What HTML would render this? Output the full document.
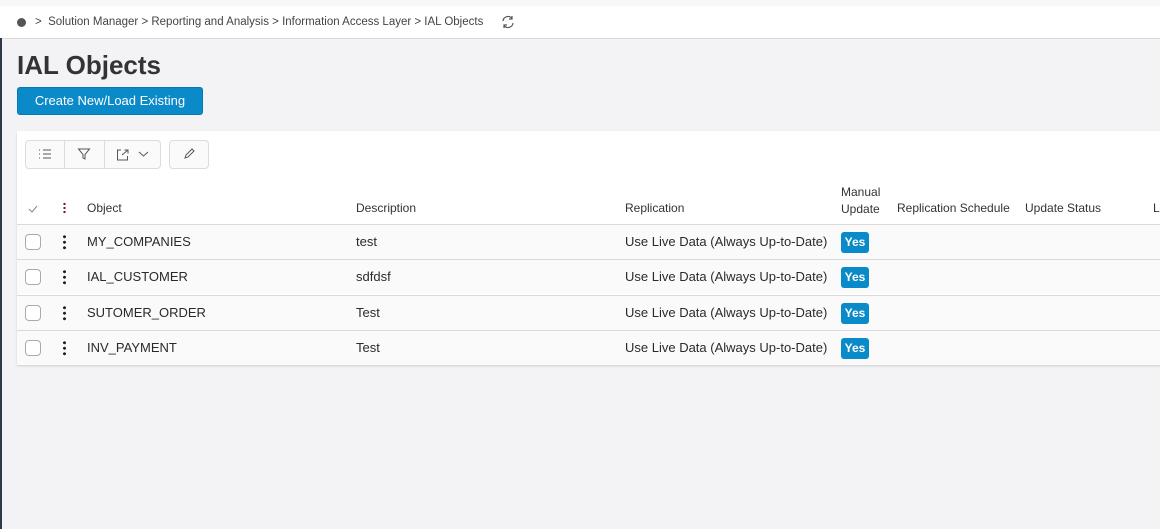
<!DOCTYPE html>
<html><head><style>
*{margin:0;padding:0;box-sizing:border-box}
body{width:1160px;height:529px;overflow:hidden;background:#f3f2f4;font-family:"Liberation Sans",sans-serif;color:#2a2a2a;position:relative}
.top{position:absolute;left:0;top:0;width:1160px;height:6px;background:#f7f7f7}
.lb{position:absolute;left:0;top:38px;width:2px;height:491px;background:#2e3a45}
.bc{position:absolute;left:0;top:6px;width:1160px;height:33px;background:#fff;border-bottom:1px solid #d8d8d8;font-size:11.5px;color:#444}
.bc .dot{position:absolute;left:17px;top:12px;width:9px;height:9px;border-radius:50%;background:#555}
.bc span.t{position:absolute;left:35px;top:10px;white-space:nowrap}
h1{position:absolute;left:17px;top:50px;font-size:26px;font-weight:bold;color:#333}
.btn{position:absolute;left:17px;top:87px;width:186px;height:28px;background:#0a8ac8;border:1px solid #0878b0;border-radius:3px;color:#fff;font-size:13px;text-align:center;line-height:26px}
.card{position:absolute;left:17px;top:131px;width:1150px;height:234px;background:#fff;box-shadow:0 1px 2px rgba(0,0,0,.15)}
.tb{position:absolute;top:140px;height:29px;border:1px solid #dcdcdc;border-radius:4px;background:#fafafa}
.hdr{position:absolute;font-size:12px;color:#333}
.row{position:absolute;left:17px;width:1143px;height:35px;background:#fafafa;border-top:1px solid #dadada;font-size:13px}
.row div{position:absolute;top:9px;white-space:nowrap}
.cb{left:8px;top:9px!important;width:16px;height:16px;border:1px solid #aaa;border-radius:4px;background:#fff}
.yes{left:824px;top:7px!important;width:28px;height:21px;background:#0a8ac8;border-radius:3px;color:#fff;font-weight:bold;font-size:12px;text-align:center;line-height:21px}
.kb{left:46px;top:9px!important;width:3px;height:16px;background:radial-gradient(circle,#222 1.4px,transparent 1.6px) 0 0/3px 5.5px repeat-y}
</style></head><body>
<div class="top"></div>
<div class="bc"><div class="dot"></div><span class="t">&gt;&nbsp;&nbsp;Solution Manager &gt; Reporting and Analysis &gt; Information Access Layer &gt; IAL Objects</span>
<svg style="position:absolute;left:500px;top:8px" width="16" height="16" viewBox="0 0 16 16" fill="none" stroke="#555" stroke-width="1.2"><path d="M3 7a5 5 0 0 1 9-2.5M13 9a5 5 0 0 1-9 2.5"/><path d="M12 2v3h-3M4 14v-3h3"/></svg></div>
<div class="lb"></div>
<h1>IAL Objects</h1>
<div class="btn">Create New/Load Existing</div>
<div class="card"></div>
<div class="tb" style="left:25px;width:136px"></div>
<div style="position:absolute;left:64px;top:141px;width:1px;height:27px;background:#dcdcdc"></div>
<div style="position:absolute;left:104px;top:141px;width:1px;height:27px;background:#dcdcdc"></div>
<svg style="position:absolute;left:37px;top:147px" width="16" height="14" viewBox="0 0 16 14" stroke="#555" stroke-width="1"><path d="M2 3h1M2 7h1M2 11h1M6 3h8M6 7h8M6 11h8"/></svg>
<svg style="position:absolute;left:77px;top:147px" width="14" height="14" viewBox="0 0 14 14" fill="none" stroke="#555"><path d="M1.5 2h11L8 7.5V12L6 11V7.5z"/></svg>
<svg style="position:absolute;left:116px;top:148px" width="14" height="13" viewBox="0 0 14 13" fill="none" stroke="#555"><path d="M5 2H1.5v10h10V8M6 7l6-5M8.5 2H12v3.5"/></svg>
<svg style="position:absolute;left:138px;top:150px" width="11" height="8" viewBox="0 0 11 8" fill="none" stroke="#555"><path d="M1 2l4.5 4L10 2"/></svg>
<div class="tb" style="left:169px;width:40px"></div>
<svg style="position:absolute;left:182px;top:147px" width="14" height="14" viewBox="0 0 14 14" fill="none" stroke="#555"><path d="M3 11l1-3 6-6 2 2-6 6z"/></svg>
<svg style="position:absolute;left:28px;top:205px" width="10" height="8" viewBox="0 0 10 8" fill="none" stroke="#888"><path d="M1 4l3 3 5-6"/></svg>
<div style="position:absolute;left:63px;top:202px;width:3px;height:12px;background:radial-gradient(circle,#7a1a1a 1.1px,transparent 1.3px) 0 0/3px 4px repeat-y"></div>
<div class="hdr" style="left:87px;top:201px">Object</div>
<div class="hdr" style="left:356px;top:201px">Description</div>
<div class="hdr" style="left:625px;top:201px">Replication</div>
<div class="hdr" style="left:841px;top:184px;line-height:17px">Manual<br>Update</div>
<div class="hdr" style="left:897px;top:201px">Replication Schedule</div>
<div class="hdr" style="left:1025px;top:201px">Update Status</div>
<div class="hdr" style="left:1153px;top:201px">L</div>
<div class="row" style="top:224px"><div class="cb"></div><div class="kb"></div><div style="left:70px">MY_COMPANIES</div><div style="left:339px">test</div><div style="left:608px">Use Live Data (Always Up-to-Date)</div><div class="yes">Yes</div></div>
<div class="row" style="top:259px"><div class="cb"></div><div class="kb"></div><div style="left:70px">IAL_CUSTOMER</div><div style="left:339px">sdfdsf</div><div style="left:608px">Use Live Data (Always Up-to-Date)</div><div class="yes">Yes</div></div>
<div class="row" style="top:295px"><div class="cb"></div><div class="kb"></div><div style="left:70px">SUTOMER_ORDER</div><div style="left:339px">Test</div><div style="left:608px">Use Live Data (Always Up-to-Date)</div><div class="yes">Yes</div></div>
<div class="row" style="top:330px"><div class="cb"></div><div class="kb"></div><div style="left:70px">INV_PAYMENT</div><div style="left:339px">Test</div><div style="left:608px">Use Live Data (Always Up-to-Date)</div><div class="yes">Yes</div></div>
</body></html>
